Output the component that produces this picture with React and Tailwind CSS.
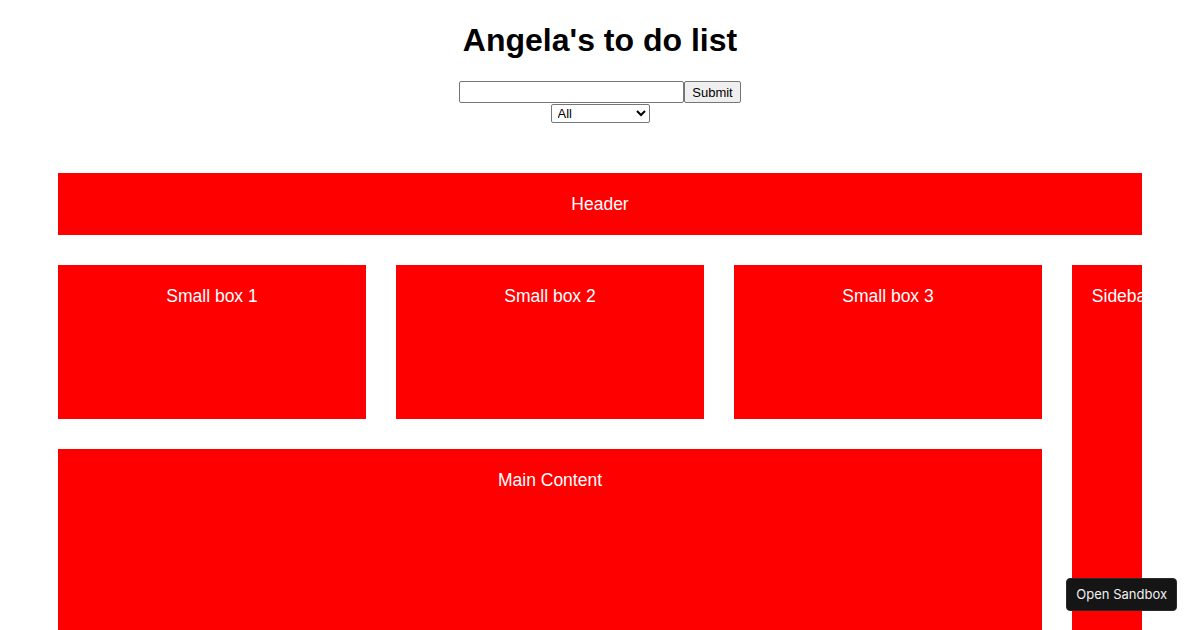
export default function App() {
  return (
    <div className="min-h-[630px] bg-white text-black" style={{ fontFamily: '"Liberation Sans", Arial, sans-serif' }}>
      <h1 className="text-center text-[32px] font-bold leading-[37px] pt-[22px] mb-[22px]">Angela's to do list</h1>
      <div className="flex flex-col items-center">
        <div className="flex pl-[-1px]">
          <input type="text" className="w-[225px] h-[22px] border border-[#767676] rounded-[2px] px-[2px] text-[13px] bg-white" />
          <button className="h-[22px] px-[7px] text-[13px] leading-[15px] border border-[#767676] rounded-[2px] bg-[#efefef]">Submit</button>
        </div>
        <select className="mt-[1px] w-[99px] h-[19px] border border-[#767676] rounded-[2px] text-[13px] leading-[15px] pl-[2px] bg-white">
          <option>All</option>
        </select>
      </div>
      <div className="mx-auto mt-[50px] w-[1084px] overflow-hidden h-[457px]">
        <div className="bg-[#ff0000] text-white text-[17.5px] leading-[22px] text-center py-[20px]">Header</div>
        <div className="mt-[30px] grid grid-cols-[308px_308px_308px_100px] grid-rows-[154px_200px] gap-[30px] w-[1114px]">
          <div className="bg-[#ff0000] text-white text-[17.5px] leading-[22px] text-center pt-[20px]">Small box 1</div>
          <div className="bg-[#ff0000] text-white text-[17.5px] leading-[22px] text-center pt-[20px]">Small box 2</div>
          <div className="bg-[#ff0000] text-white text-[17.5px] leading-[22px] text-center pt-[20px]">Small box 3</div>
          <div className="row-span-2 bg-[#ff0000] text-white text-[17.5px] leading-[22px] text-center pt-[20px]">Sidebar</div>
          <div className="col-span-3 bg-[#ff0000] text-white text-[17.5px] leading-[22px] text-center pt-[20px]">Main Content</div>
        </div>
      </div>
      <div className="fixed right-[23px] bottom-[19px] h-[33px] px-[9px] flex items-center rounded-[4px] bg-[#151515] text-[#f0f0f0] text-[13px] border border-[#2a2a2a]" style={{ fontFamily: 'Inter, "Liberation Sans", sans-serif' }}>
        Open Sandbox
      </div>
    </div>
  );
}
